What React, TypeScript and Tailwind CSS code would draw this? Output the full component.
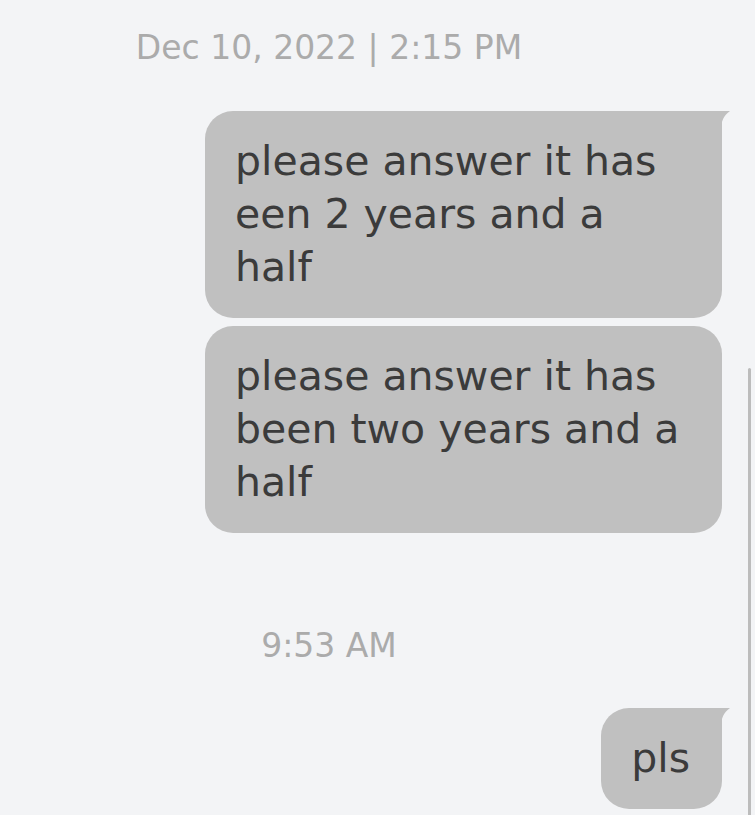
const Tail = () => (
  <svg
    className="absolute right-[-9px] top-0"
    width="10"
    height="16"
    viewBox="0 0 10 16"
  >
    <path d="M0 0 H9 C5 3 1 7 0 16 Z" fill="#c0c0c0" />
  </svg>
);

const Bubble = ({ text, tail }: { text: string; tail?: boolean }) => (
  <div
    className={
      "relative max-w-[517px] bg-[#c0c0c0] text-[#3b3b3b] pl-[30px] pr-[32px] py-[24px] text-[41px] leading-[53px] rounded-[28px] " +
      (tail ? "rounded-tr-none" : "")
    }
  >
    {text}
    {tail && <Tail />}
  </div>
);

const App = () => {
  return (
    <div className="w-[755px] h-[815px] overflow-hidden bg-[#f3f4f6] flex font-['DejaVu_Sans',sans-serif]">
      {/* chat column */}
      <div className="flex-1 flex flex-col pr-[26px] pt-[28px]">
        <div className="w-[658px] text-center text-[#ababab] text-[33px] leading-[40px]">
          Dec 10, 2022 | 2:15 PM
        </div>
        <div className="flex flex-col items-end gap-[8px] mt-[43px]">
          <Bubble text="please answer it has een 2 years and a half" tail />
          <Bubble text="please answer it has been two years and a half" />
        </div>
        <div className="w-[658px] text-center text-[#ababab] text-[33px] leading-[40px] mt-[93px]">
          9:53 AM
        </div>
        <div className="flex justify-end mt-[42px]">
          <Bubble text="pls" tail />
        </div>
      </div>
      {/* scrollbar */}
      <div className="w-[7px] flex flex-col">
        <div className="mt-[368px] flex-1 w-[3px] bg-[#bcbcbc] rounded-t-[2px]" />
      </div>
    </div>
  );
};

export default App;
